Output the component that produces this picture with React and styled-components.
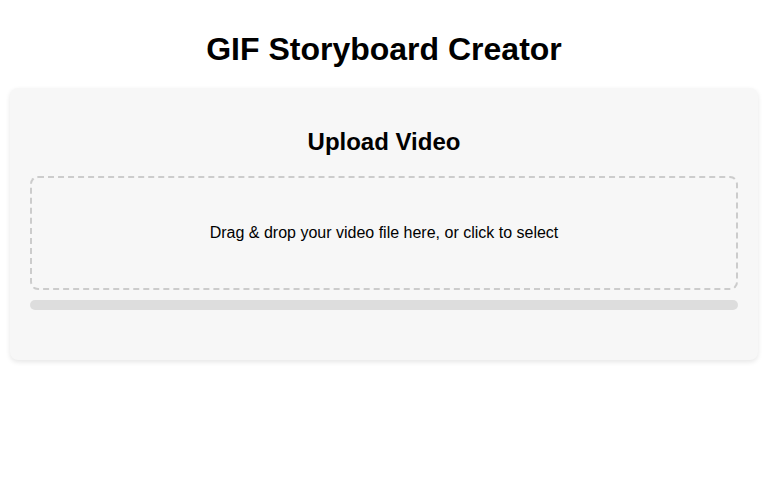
import styled, { createGlobalStyle } from 'styled-components';

const GlobalStyle = createGlobalStyle`
	body {
		margin: 0;
		background: #ffffff;
		font-family: 'Liberation Sans', Arial, sans-serif;
		color: #000;
	}
`;

function App() {
	return (
		<Page>
			<GlobalStyle />
			<Title>GIF Storyboard Creator</Title>
			<Card>
				<SectionTitle>Upload Video</SectionTitle>
				<DropZone>
					<DropText>Drag &amp; drop your video file here, or click to select</DropText>
				</DropZone>
				<ProgressTrack>
					<ProgressFill style={{ width: '0%' }} />
				</ProgressTrack>
			</Card>
		</Page>
	);
}

export default App;

const Page = styled.div`
	padding: 10px;
`;

const Title = styled.h1`
	margin: 21px 0 20px;
	font-size: 32px;
	line-height: 37px;
	font-weight: bold;
	text-align: center;
`;

const Card = styled.div`
	background: #f7f7f7;
	border-radius: 8px;
	box-shadow: 0 2px 5px rgba(0, 0, 0, 0.1);
	padding: 20px 20px 50px;
`;

const SectionTitle = styled.h2`
	margin: 20px 0 20px;
	font-size: 24px;
	line-height: 28px;
	font-weight: bold;
	text-align: center;
`;

const DropZone = styled.div`
	border: 2px dashed #cccccc;
	border-radius: 8px;
	padding: 30px 20px;
	text-align: center;
	cursor: pointer;
`;

const DropText = styled.p`
	margin: 16px 0;
	font-size: 16px;
	line-height: 18px;
`;

const ProgressTrack = styled.div`
	margin-top: 10px;
	height: 10px;
	border-radius: 5px;
	background: #dddddd;
	overflow: hidden;
`;

const ProgressFill = styled.div`
	height: 100%;
	background: #4caf50;
`;
